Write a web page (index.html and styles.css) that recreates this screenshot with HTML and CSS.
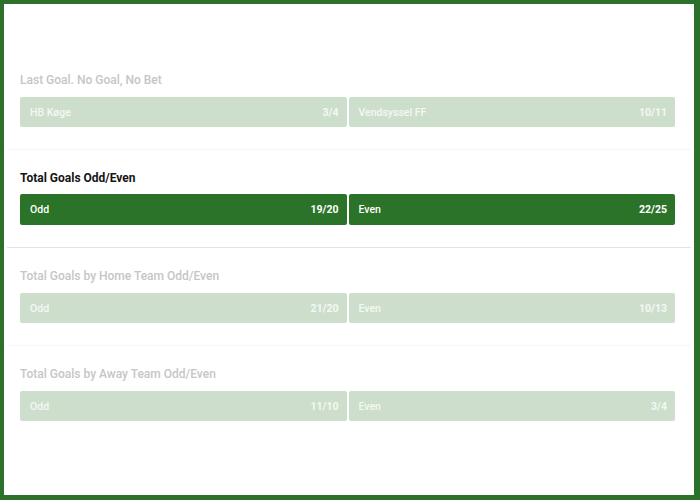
FILE: index.html
```html
<!DOCTYPE html>
<html>
<head>
<meta charset="utf-8">
<link rel="stylesheet" href="styles.css">
</head>
<body>
<div class="frame">
  <div class="markets">
    <section class="market faded">
      <h3 class="title">Last Goal. No Goal, No Bet</h3>
      <div class="options">
        <div class="opt"><span class="lbl">HB Køge</span><span class="odds">3/4</span></div>
        <div class="opt"><span class="lbl">Vendsyssel FF</span><span class="odds">10/11</span></div>
      </div>
    </section>
    <section class="market active">
      <h3 class="title">Total Goals Odd/Even</h3>
      <div class="options">
        <div class="opt"><span class="lbl">Odd</span><span class="odds">19/20</span></div>
        <div class="opt"><span class="lbl">Even</span><span class="odds">22/25</span></div>
      </div>
    </section>
    <section class="market faded">
      <h3 class="title">Total Goals by Home Team Odd/Even</h3>
      <div class="options">
        <div class="opt"><span class="lbl">Odd</span><span class="odds">21/20</span></div>
        <div class="opt"><span class="lbl">Even</span><span class="odds">10/13</span></div>
      </div>
    </section>
    <section class="market faded last">
      <h3 class="title">Total Goals by Away Team Odd/Even</h3>
      <div class="options">
        <div class="opt"><span class="lbl">Odd</span><span class="odds">11/10</span></div>
        <div class="opt"><span class="lbl">Even</span><span class="odds">3/4</span></div>
      </div>
    </section>
  </div>
</div>
</body>
</html>
```

FILE: styles.css
```css
html, body {
  margin: 0;
  padding: 0;
  background: #fff;
}
.frame {
  box-sizing: border-box;
  width: 700px;
  height: 500px;
  border-style: solid;
  border-color: #2b7129;
  border-width: 4px 6px 5px 4px;
  background: #fff;
  font-family: Roboto, "Liberation Sans", Arial, sans-serif;
}
.markets {
  padding: 48px 3px 0 3px;
}
.market {
  padding: 21px 16px 22px 13px;
  border-bottom: 1px solid #e4e4e4;
}
.market.faded {
  border-bottom-color: #f6f6f6;
}
.market.last {
  border-bottom-color: transparent;
}
.title {
  margin: 0 0 9px 0;
  font-size: 12px;
  line-height: 14px;
  font-weight: 700;
  color: #151515;
}
.faded .title {
  color: #c6c6c6;
  font-weight: 500;
  margin-bottom: 10px;
}
.options {
  display: grid;
  grid-template-columns: 1fr 1fr;
  gap: 2px;
}
.opt {
  height: 31px;
  border-radius: 2px;
  background: #2b7329;
  display: flex;
  align-items: center;
  justify-content: space-between;
  padding: 0 8px 0 10px;
  color: #fff;
  font-size: 10.5px;
}
.faded .opt {
  background: #cddfcc;
  height: 30px;
  color: #f4f8f4;
}
.lbl {
  font-weight: 500;
}
.odds {
  font-weight: 700;
}
```
